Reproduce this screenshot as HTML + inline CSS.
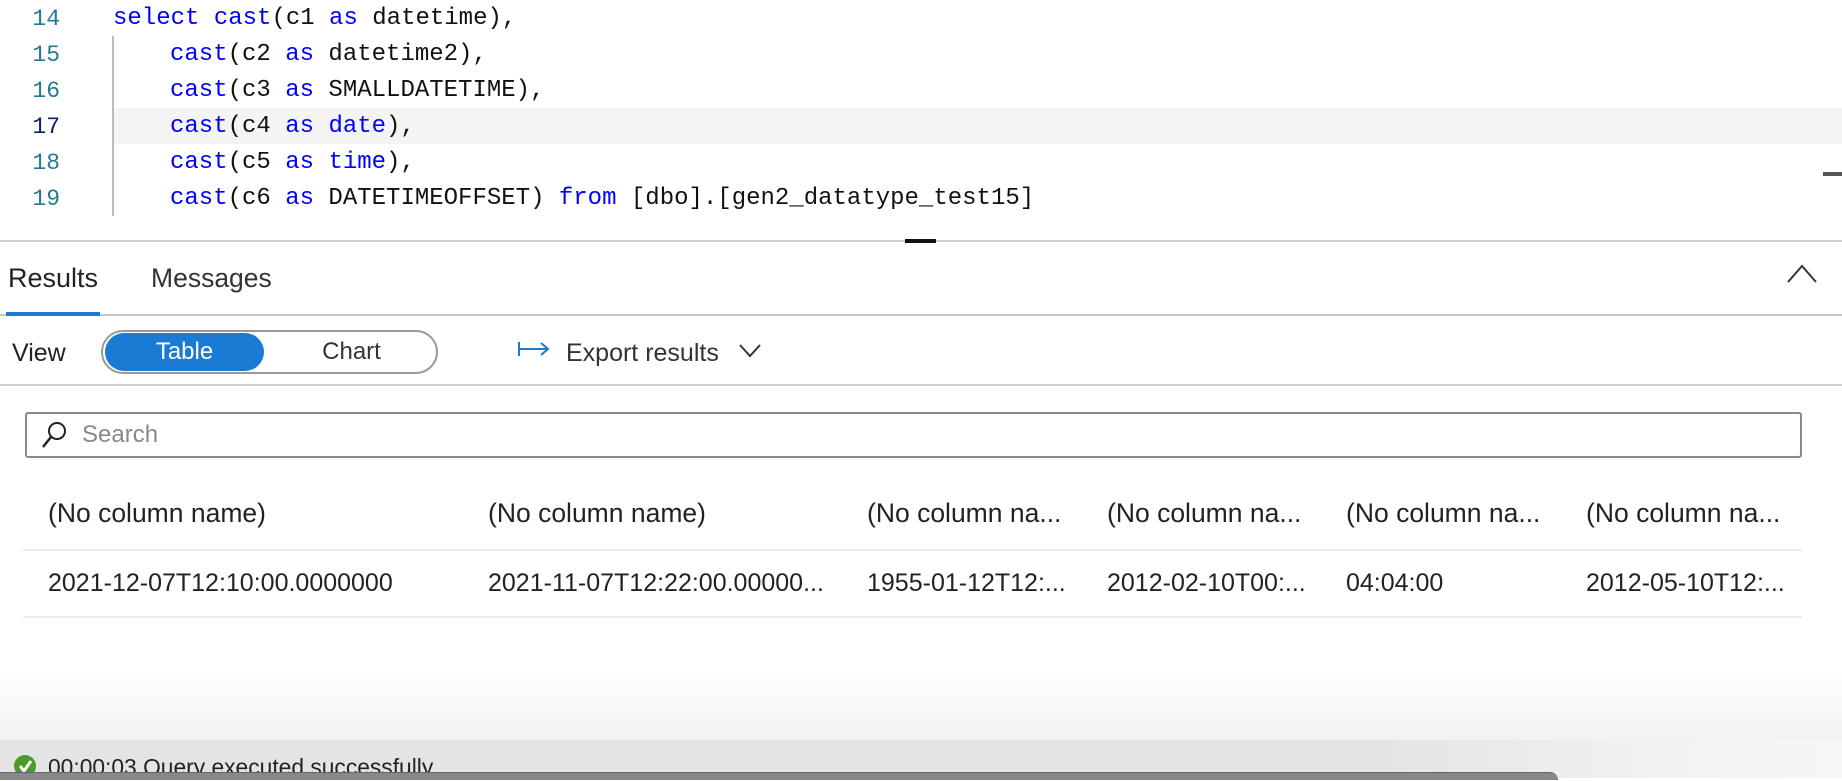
<!DOCTYPE html>
<html><head><meta charset="utf-8"><style>
*{margin:0;padding:0;box-sizing:border-box}
body{width:1842px;height:778px;overflow:hidden;background:#fff;position:relative;font-family:"Liberation Sans",sans-serif;color:#222}
.a{position:absolute;white-space:nowrap}
.code{font-family:"Liberation Mono",monospace;font-size:24px;line-height:36px;color:#111}
.ln{color:#237893;font-family:"Liberation Mono",monospace;font-size:23px;line-height:36px;width:60px;text-align:right}
.k{color:#0000ff}
.ui{font-size:25px;line-height:30px}
.hdr{font-size:26.5px;line-height:30px;color:#222}
.cell{font-size:25px;line-height:30px;color:#222}
</style></head><body>
<div class="a" style="left:113px;top:108px;width:1729px;height:36px;background:#f4f4f4"></div>
<div class="a" style="left:112px;top:36px;width:2px;height:180px;background:#bbb"></div>
<div class="a ln" style="left:0;top:1px">14</div>
<div class="a ln" style="left:0;top:37px">15</div>
<div class="a ln" style="left:0;top:73px">16</div>
<div class="a ln" style="left:0;top:109px;color:#0b216f">17</div>
<div class="a ln" style="left:0;top:145px">18</div>
<div class="a ln" style="left:0;top:181px">19</div>
<div class="a code" style="left:113px;top:1px"><span class="k">select</span> <span class="k">cast</span>(c1 <span class="k">as</span> datetime),</div>
<div class="a code" style="left:170px;top:37px"><span class="k">cast</span>(c2 <span class="k">as</span> datetime2),</div>
<div class="a code" style="left:170px;top:73px"><span class="k">cast</span>(c3 <span class="k">as</span> SMALLDATETIME),</div>
<div class="a code" style="left:170px;top:109px"><span class="k">cast</span>(c4 <span class="k">as</span> <span class="k">date</span>),</div>
<div class="a code" style="left:170px;top:145px"><span class="k">cast</span>(c5 <span class="k">as</span> <span class="k">time</span>),</div>
<div class="a code" style="left:170px;top:181px"><span class="k">cast</span>(c6 <span class="k">as</span> DATETIMEOFFSET) <span class="k">from</span> [dbo].[gen2_datatype_test15]</div>
<div class="a" style="left:1823px;top:172px;width:19px;height:4px;background:#555"></div>
<div class="a" style="left:0;top:240px;width:1842px;height:2px;background:#d0d0d0"></div>
<div class="a" style="left:905px;top:239px;width:31px;height:4px;background:#111"></div>
<div class="a ui" style="left:8px;top:263px;font-size:27px;color:#222">Results</div>
<div class="a ui" style="left:151px;top:263px;font-size:26.5px;color:#333">Messages</div>
<svg class="a" style="left:1786px;top:262px" width="32" height="22"><path d="M2 20 L16 4 L30 20" fill="none" stroke="#333" stroke-width="2"/></svg>
<div class="a" style="left:0;top:314px;width:1842px;height:2px;background:#c8c8c8"></div>
<div class="a" style="left:6px;top:312px;width:94px;height:4px;background:#1a7ad4"></div>
<div class="a ui" style="left:12px;top:338px;color:#222">View</div>
<div class="a" style="left:101px;top:330px;width:337px;height:44px;border:2px solid #999;border-radius:22px"></div>
<div class="a" style="left:105px;top:333px;width:159px;height:38px;background:#1a7ad4;border-radius:19px"></div>
<div class="a ui" style="left:105px;top:337px;width:159px;text-align:center;color:#fff;font-size:24px">Table</div>
<div class="a ui" style="left:272px;top:337px;width:159px;text-align:center;color:#333;font-size:24px">Chart</div>
<svg class="a" style="left:517px;top:340px" width="34" height="20"><path d="M2 2 V16 M2 9 H30 M24 3 L31 9 L24 15" fill="none" stroke="#1a7ad4" stroke-width="2"/></svg>
<div class="a ui" style="left:566px;top:338px;color:#333">Export results</div>
<svg class="a" style="left:738px;top:343px" width="24" height="16"><path d="M2 2 L12 13 L22 2" fill="none" stroke="#333" stroke-width="2"/></svg>
<div class="a" style="left:0;top:384px;width:1842px;height:2px;background:#d0d0d0"></div>
<div class="a" style="left:25px;top:412px;width:1777px;height:46px;border:2px solid #8a8a8a;border-radius:3px"></div>
<svg class="a" style="left:40px;top:420px" width="30" height="30"><circle cx="17" cy="11" r="8" fill="none" stroke="#222" stroke-width="2"/><path d="M11 17 L3 27" stroke="#222" stroke-width="2.5"/></svg>
<div class="a ui" style="left:82px;top:420px;color:#888;font-size:24px">Search</div>
<div class="a hdr" style="left:48px;top:498px">(No column name)</div>
<div class="a hdr" style="left:488px;top:498px">(No column name)</div>
<div class="a hdr" style="left:867px;top:498px">(No column na...</div>
<div class="a hdr" style="left:1107px;top:498px">(No column na...</div>
<div class="a hdr" style="left:1346px;top:498px">(No column na...</div>
<div class="a hdr" style="left:1586px;top:498px">(No column na...</div>
<div class="a" style="left:23px;top:549px;width:1779px;height:2px;background:#ececec"></div>
<div class="a cell" style="left:48px;top:568px">2021-12-07T12:10:00.0000000</div>
<div class="a cell" style="left:488px;top:568px">2021-11-07T12:22:00.00000...</div>
<div class="a cell" style="left:867px;top:568px">1955-01-12T12:...</div>
<div class="a cell" style="left:1107px;top:568px">2012-02-10T00:...</div>
<div class="a cell" style="left:1346px;top:568px">04:04:00</div>
<div class="a cell" style="left:1586px;top:568px">2012-05-10T12:...</div>
<div class="a" style="left:23px;top:616px;width:1779px;height:2px;background:#ececec"></div>
<div class="a" style="left:0;top:670px;width:1842px;height:70px;background:linear-gradient(#fff,#f2f2f2)"></div>
<div class="a" style="left:0;top:740px;width:1842px;height:38px;background:linear-gradient(90deg,#e4e4e4 0%,#e4e4e4 75%,#f2f2f2 90%,#f6f6f6 100%)"></div>
<div class="a" style="left:14px;top:755px;width:22px;height:22px;border-radius:11px;background:#4c9a2a"></div>
<svg class="a" style="left:14px;top:755px" width="22" height="22"><path d="M6 11 L10 16 L17 6" fill="none" stroke="#fff" stroke-width="3"/></svg>
<div class="a" style="left:48px;top:753px;font-size:22.8px;line-height:28px;color:#222">00:00:03 Query executed successfully.</div>
<div class="a" style="left:0;top:772px;width:1558px;height:8px;background:#888;border-radius:0 8px 0 0;border-top:1px solid #666"></div>
</body></html>
